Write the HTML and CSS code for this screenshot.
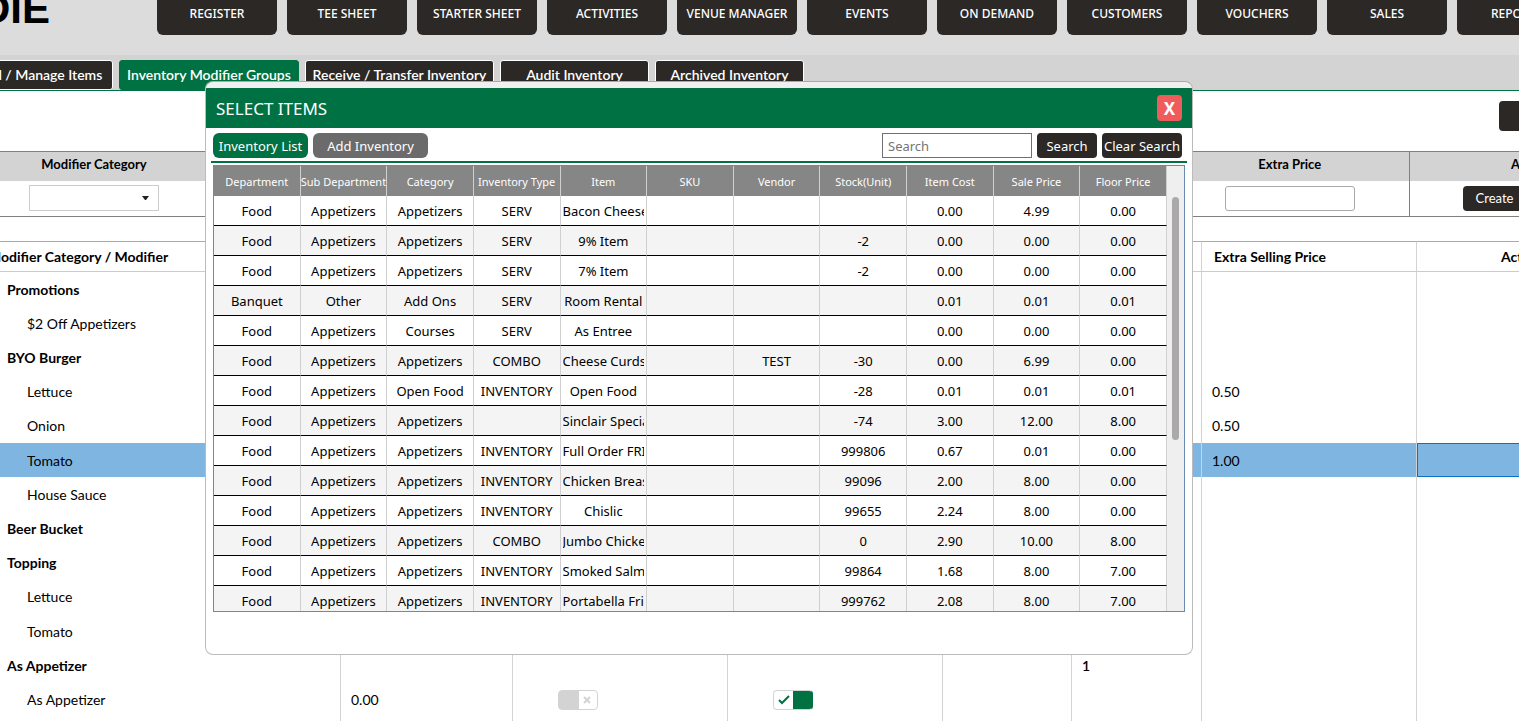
FILE: index.html
```html
<!DOCTYPE html>
<html lang="en">
<head>
  <meta charset="UTF-8">
  <meta name="viewport" content="width=device-width, initial-scale=1.0">
  <title>Inventory Modifier Groups</title>
  <link rel="stylesheet" href="styles.css">
</head>
<body>
  <header class="top-bar">
    <div class="logo">DIE</div>
    <nav class="main-nav">
      <button type="button">REGISTER</button>
      <button type="button">TEE SHEET</button>
      <button type="button">STARTER SHEET</button>
      <button type="button">ACTIVITIES</button>
      <button type="button">VENUE MANAGER</button>
      <button type="button">EVENTS</button>
      <button type="button">ON DEMAND</button>
      <button type="button">CUSTOMERS</button>
      <button type="button">VOUCHERS</button>
      <button type="button">SALES</button>
      <button type="button">REPORTS</button>
    </nav>
  </header>

  <nav class="tabs">
    <a href="#" class="tab tab-first">Add / Manage Items</a>
    <a href="#" class="tab active">Inventory Modifier Groups</a>
    <a href="#" class="tab tab-wide">Receive / Transfer Inventory</a>
    <a href="#" class="tab">Audit Inventory</a>
    <a href="#" class="tab">Archived Inventory</a>
  </nav>

  <main>
    <div class="actions">
      <button type="button" class="dark-btn" aria-label="Back"></button>
    </div>

    <table class="filter-table">
      <colgroup><col class="f-category"><col><col class="f-extra"><col class="f-action"></colgroup>
      <thead>
        <tr>
          <th><label for="modCategory">Modifier Category</label></th>
          <th></th>
          <th><label for="extraPrice">Extra Price</label></th>
          <th class="split">Action</th>
        </tr>
      </thead>
      <tbody>
        <tr>
          <td>
            <div class="select-wrap">
              <select id="modCategory"><option></option></select>
              <svg width="7" height="4" viewBox="0 0 7 4"><path d="M0 0h7L4 4H3z" fill="#222"/></svg>
            </div>
          </td>
          <td></td>
          <td><input type="text" id="extraPrice"></td>
          <td class="split"><button type="button" class="dark-btn create">Create</button></td>
        </tr>
      </tbody>
    </table>

    <table class="modifier-table">
      <colgroup>
        <col class="m-name"><col class="m-price"><col class="m-wide"><col class="m-wide"><col class="m-small"><col class="m-qty"><col class="m-wide"><col>
      </colgroup>
      <thead>
        <tr><th class="name-head">Modifier Category / Modifier</th><th></th><th></th><th></th><th></th><th></th><th>Extra Selling Price</th><th class="active-head">Active</th></tr>
      </thead>
      <tbody>
        <tr class="group"><td>Promotions</td><td></td><td></td><td></td><td></td><td></td><td></td><td></td></tr>
        <tr><td>$2 Off Appetizers</td><td></td><td></td><td></td><td></td><td></td><td></td><td></td></tr>
        <tr class="group"><td>BYO Burger</td><td></td><td></td><td></td><td></td><td></td><td></td><td></td></tr>
        <tr><td>Lettuce</td><td></td><td></td><td></td><td></td><td></td><td>0.50</td><td></td></tr>
        <tr><td>Onion</td><td></td><td></td><td></td><td></td><td></td><td>0.50</td><td></td></tr>
        <tr class="selected"><td>Tomato</td><td></td><td></td><td></td><td></td><td></td><td>1.00</td><td class="focused"></td></tr>
        <tr><td>House Sauce</td><td></td><td></td><td></td><td></td><td></td><td></td><td></td></tr>
        <tr class="group"><td>Beer Bucket</td><td></td><td></td><td></td><td></td><td></td><td></td><td></td></tr>
        <tr class="group"><td>Topping</td><td></td><td></td><td></td><td></td><td></td><td></td><td></td></tr>
        <tr><td>Lettuce</td><td></td><td></td><td></td><td></td><td></td><td></td><td></td></tr>
        <tr><td>Tomato</td><td></td><td></td><td></td><td></td><td></td><td></td><td></td></tr>
        <tr class="group"><td>As Appetizer</td><td></td><td></td><td></td><td></td><td>1</td><td></td><td></td></tr>
        <tr>
          <td>As Appetizer</td>
          <td>0.00</td>
          <td>
            <label class="toggle">
              <input type="checkbox" aria-label="Required">
              <svg width="10" height="10" viewBox="0 0 10 10"><path d="M2 2l6 6M8 2l-6 6" stroke="#d3d3d3" stroke-width="2"/></svg>
            </label>
          </td>
          <td>
            <label class="toggle on">
              <input type="checkbox" aria-label="Enabled" checked>
              <svg width="12" height="10" viewBox="0 0 12 10"><path d="M1 5l3 3 7-7" fill="none" stroke="#007142" stroke-width="2"/></svg>
            </label>
          </td>
          <td></td><td></td><td></td><td></td>
        </tr>
        <tr><td></td><td></td><td></td><td></td><td></td><td></td><td></td><td></td></tr>
      </tbody>
    </table>
  </main>

  <div class="modal" role="dialog" aria-labelledby="modalTitle">
    <div class="modal-header">
      <h2 id="modalTitle">SELECT ITEMS</h2>
      <button type="button" class="close">X</button>
    </div>
    <div class="modal-toolbar">
      <button type="button" class="list-btn">Inventory List</button>
      <button type="button" class="add-btn">Add Inventory</button>
      <input type="text" class="search" placeholder="Search" aria-label="Search">
      <button type="button" class="dark-btn search-btn">Search</button>
      <button type="button" class="dark-btn clear-btn">Clear Search</button>
    </div>
    <div class="items-box">
      <table class="items-table">
        <thead>
          <tr><th>Department</th><th>Sub Department</th><th>Category</th><th>Inventory Type</th><th>Item</th><th>SKU</th><th>Vendor</th><th>Stock(Unit)</th><th>Item Cost</th><th>Sale Price</th><th>Floor Price</th></tr>
        </thead>
        <tbody>
          <tr><td>Food</td><td>Appetizers</td><td>Appetizers</td><td>SERV</td><td>Bacon Cheeseburger</td><td></td><td></td><td></td><td>0.00</td><td>4.99</td><td>0.00</td></tr>
          <tr><td>Food</td><td>Appetizers</td><td>Appetizers</td><td>SERV</td><td>9% Item</td><td></td><td></td><td>-2</td><td>0.00</td><td>0.00</td><td>0.00</td></tr>
          <tr><td>Food</td><td>Appetizers</td><td>Appetizers</td><td>SERV</td><td>7% Item</td><td></td><td></td><td>-2</td><td>0.00</td><td>0.00</td><td>0.00</td></tr>
          <tr><td>Banquet</td><td>Other</td><td>Add Ons</td><td>SERV</td><td>Room Rental</td><td></td><td></td><td></td><td>0.01</td><td>0.01</td><td>0.01</td></tr>
          <tr><td>Food</td><td>Appetizers</td><td>Courses</td><td>SERV</td><td>As Entree</td><td></td><td></td><td></td><td>0.00</td><td>0.00</td><td>0.00</td></tr>
          <tr><td>Food</td><td>Appetizers</td><td>Appetizers</td><td>COMBO</td><td>Cheese Curds</td><td></td><td>TEST</td><td>-30</td><td>0.00</td><td>6.99</td><td>0.00</td></tr>
          <tr><td>Food</td><td>Appetizers</td><td>Open Food</td><td>INVENTORY</td><td>Open Food</td><td></td><td></td><td>-28</td><td>0.01</td><td>0.01</td><td>0.01</td></tr>
          <tr><td>Food</td><td>Appetizers</td><td>Appetizers</td><td></td><td>Sinclair Special</td><td></td><td></td><td>-74</td><td>3.00</td><td>12.00</td><td>8.00</td></tr>
          <tr><td>Food</td><td>Appetizers</td><td>Appetizers</td><td>INVENTORY</td><td>Full Order FRIES</td><td></td><td></td><td>999806</td><td>0.67</td><td>0.01</td><td>0.00</td></tr>
          <tr><td>Food</td><td>Appetizers</td><td>Appetizers</td><td>INVENTORY</td><td>Chicken Breast</td><td></td><td></td><td>99096</td><td>2.00</td><td>8.00</td><td>0.00</td></tr>
          <tr><td>Food</td><td>Appetizers</td><td>Appetizers</td><td>INVENTORY</td><td>Chislic</td><td></td><td></td><td>99655</td><td>2.24</td><td>8.00</td><td>0.00</td></tr>
          <tr><td>Food</td><td>Appetizers</td><td>Appetizers</td><td>COMBO</td><td>Jumbo Chicken</td><td></td><td></td><td>0</td><td>2.90</td><td>10.00</td><td>8.00</td></tr>
          <tr><td>Food</td><td>Appetizers</td><td>Appetizers</td><td>INVENTORY</td><td>Smoked Salmon</td><td></td><td></td><td>99864</td><td>1.68</td><td>8.00</td><td>7.00</td></tr>
          <tr><td>Food</td><td>Appetizers</td><td>Appetizers</td><td>INVENTORY</td><td>Portabella Fries</td><td></td><td></td><td>999762</td><td>2.08</td><td>8.00</td><td>7.00</td></tr>
        </tbody>
      </table>
      <div class="scroll-track"><div class="scroll-thumb"></div></div>
    </div>
  </div>
</body>
</html>
```

FILE: styles.css
```css
* { box-sizing: border-box; }
html { overflow: hidden; }
body { margin: 0; position: relative; height: 100vh; overflow: hidden; background: #fff; color: #000; font-family: Lato, "Open Sans", sans-serif; font-size: 14px; }
button, input, select { font-family: inherit; margin: 0; }
button { border: none; cursor: pointer; padding: 0; white-space: nowrap; }

/* top bar */
.top-bar { height: 55px; background: #dcdcdc; display: flex; align-items: flex-start; overflow: hidden; }
.logo { flex: none; width: 177px; margin-top: -15px; margin-left: -20px; font-family: "Liberation Sans", Arial, sans-serif; font-weight: 700; font-size: 42px; line-height: 48px; }
.main-nav { display: flex; gap: 10px; margin-top: -8px; }
.main-nav button { flex: none; width: 120px; height: 43px; border-radius: 6px; background: #2c2825; color: #fff; font-family: "Noto Sans", sans-serif; font-size: 12px; font-weight: 500; }

.tabs { height: 36px; display: flex; gap: 6px; padding-top: 5px; background: #d3d3d3; border-bottom: 1px solid #007142; }
.tab { flex: none; width: 149px; height: 30px; line-height: 27px; border: 1px solid #fff; border-radius: 3px; background: #2c2825; color: #fff; font-size: 14px; font-weight: 600; text-align: center; text-decoration: none; white-space: nowrap; }
.tab-first { width: 147px; margin-left: -34px; }
.tab-wide { width: 189px; }
.tab.active { width: 180px; background: #007142; border-color: #007142; }

.dark-btn { background: #2c2825; color: #fff; border-radius: 4px; }
.actions { display: flex; justify-content: flex-end; height: 60px; padding-top: 10px; }
.actions .dark-btn { width: 120px; height: 30px; margin-right: -100px; }

/* filter row */
.filter-table { width: calc(100% + 132px); border-collapse: collapse; table-layout: fixed; border-bottom: 1px solid #808080; }
.filter-table th { height: 29px; padding: 0 0 4px; border-top: 1px solid #808080; background: #d3d3d3; font-size: 13px; font-weight: 700; }
.filter-table td { height: 36px; padding: 0; text-align: center; }
.filter-table .split { border-left: 1px solid #808080; }
.f-category { width: 188px; }
.f-extra { width: 238px; }
.f-action { width: 242px; }
.select-wrap { position: relative; width: 130px; margin: 0 auto; }
.select-wrap select { display: block; width: 130px; height: 26px; border: 1px solid #ccc; background: #fff; appearance: none; }
.select-wrap svg { position: absolute; right: 10px; top: 11px; }
.filter-table input { width: 130px; height: 25px; border: 1px solid #aaa; border-radius: 3px; vertical-align: middle; }
.create { display: block; width: 64px; height: 25px; margin-left: 53px; font-size: 13px; }

/* modifier grid */
.modifier-table { width: calc(100% + 120px); height: 510px; margin: 24px 0 0 -20px; border-collapse: separate; border-spacing: 0; table-layout: fixed; }
.modifier-table th { height: 31px; padding: 0 12px; border-top: 1px solid #aaa; border-bottom: 1px solid #ccc; text-align: left; font-size: 14px; font-weight: 700; }
.modifier-table .name-head { padding: 0 8px; }
.modifier-table .active-head { padding-left: 84px; }
.modifier-table td { height: 34px; padding: 0 10px; border-right: 1px solid #d3d3d3; }
.modifier-table th:nth-child(n+6) { border-right: 1px solid #d3d3d3; }
.modifier-table td:first-child { padding-left: 47px; }
.modifier-table .group td:first-child { padding-left: 27px; font-weight: 700; }
.modifier-table .group td { font-weight: 600; }
.modifier-table .selected td { background: #7fb5e1; }
.modifier-table .selected .focused { border: 1px solid #0a72c4; }
.m-name { width: 361px; }
.m-price { width: 172px; }
.m-wide { width: 215px; }
.m-small { width: 129px; }
.m-qty { width: 130px; }

.toggle { display: flex; align-items: center; justify-content: flex-end; position: relative; width: 40px; height: 20px; margin-left: 35px; padding-right: 5px; border: 1px solid #d3d3d3; border-radius: 4px; background: linear-gradient(to right, #d3d3d3 20px, #fff 20px); }
.toggle.on { justify-content: flex-start; padding: 0 0 0 4px; background: linear-gradient(to right, #fff 19px, #007142 19px); border-right-color: #007142; }
.toggle input { position: absolute; width: 100%; height: 100%; margin: 0; opacity: 0; }

/* select items dialog */
.modal { position: absolute; top: 81px; left: 205px; right: 326px; height: 574px; padding-top: 6px; overflow: hidden; background: #fff; border: 1px solid #bbb; border-top-color: #aaa; border-radius: 8px; box-shadow: inset 0 6px #f0f0f0; font-family: "Noto Sans", "Open Sans", sans-serif; }
.modal-header { display: flex; align-items: center; justify-content: space-between; height: 40px; padding: 0 10px; background: #007142; color: #fff; }
.modal-header h2 { margin: 0; font-size: 17px; font-weight: 400; }
.close { width: 25px; height: 26px; border-radius: 4px; background: #f05b5b; color: #fff; font-size: 17px; font-weight: 700; }
.modal-toolbar { display: flex; gap: 5px; height: 35px; margin: 0 5px; padding: 5px 5px 0 2px; border-bottom: 2px solid #007142; }
.modal-toolbar button { height: 25px; font-size: 13px; }
.modal-toolbar .list-btn { width: 95px; border-radius: 6px; background: #007142; color: #fff; }
.modal-toolbar .add-btn { width: 115px; border-radius: 6px; background: #6b6b6b; color: #fff; }
.search { width: 150px; height: 25px; margin-left: auto; padding: 0 5px; border: 1px solid #707070; font-size: 13px; }
.search::placeholder { color: #757575; }
.search-btn { width: 60px; }
.clear-btn { width: 80px; }

.items-box { display: flex; height: 447px; margin: 2px 7px 0; overflow: hidden; border: 1px solid #6a8bb0; }
.items-table { flex: 1; align-self: flex-start; width: 100%; border-collapse: separate; border-spacing: 0; table-layout: fixed; }
.items-table th, .items-table td { overflow: hidden; white-space: nowrap; text-align: center; border-right: 1px solid #d0d0d0; }
.items-table th { height: 30px; padding: 0; background: #868686; color: #fff; font-size: 11px; font-weight: 400; }
.items-table td { height: 30px; padding: 0 2px; overflow: clip; overflow-clip-margin: content-box; border-bottom: 1px solid #000; font-size: 13px; }
.items-table tbody tr:nth-child(even) { background: #f4f4f4; }
.scroll-track { flex: none; width: 17px; padding: 31px 5px 0; background: #efefef; }
.scroll-thumb { height: 243px; border-radius: 4px; background: #aba9a9; }
```
